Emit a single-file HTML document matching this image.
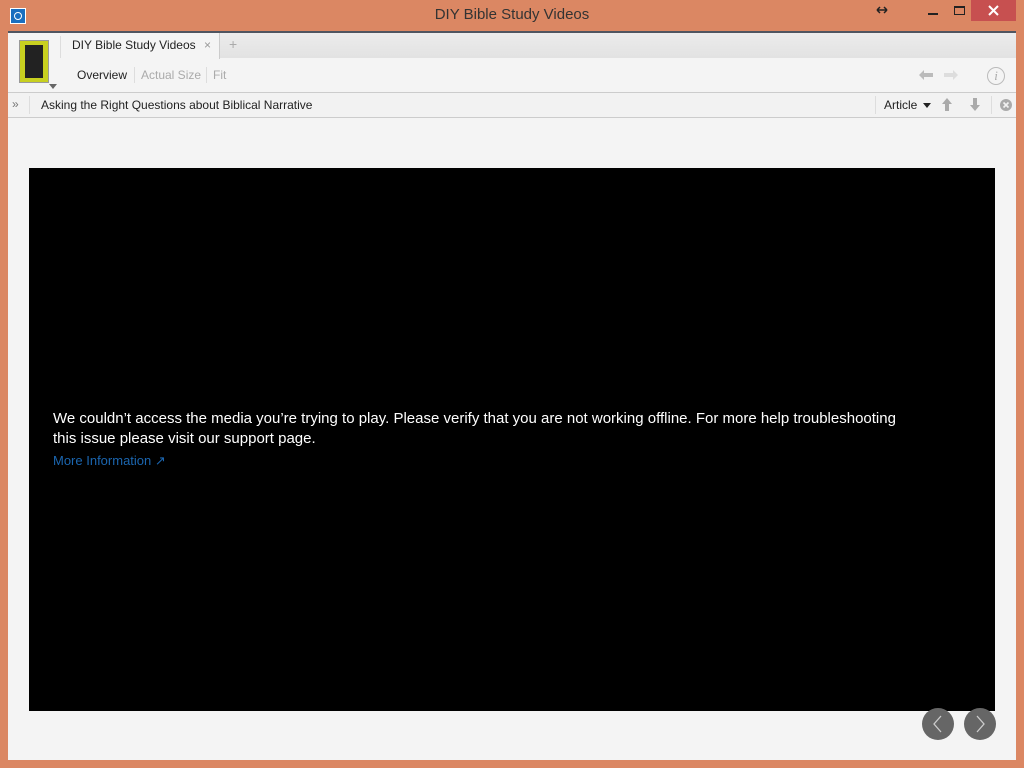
<!DOCTYPE html>
<html><head><meta charset="utf-8"><style>
*{margin:0;padding:0;box-sizing:border-box}
body{width:1024px;height:768px;background:#db8763;font-family:"Liberation Sans",sans-serif;position:relative;overflow:hidden}
.abs{position:absolute}
.title{left:0;top:6px;width:1024px;text-align:center;font-size:15px;color:#333}
.win{left:8px;top:31px;width:1008px;height:729px;background:#f4f4f4}
.t{font-size:12px;color:#222;white-space:nowrap}
</style></head><body>
<div class="abs" style="left:10px;top:8px;width:16px;height:16px;background:#1a6fbf;border:1px solid #fff"><div style="margin:3px;width:8px;height:8px;border:1.5px solid #fff;border-radius:50%"></div></div>
<div class="abs title">DIY Bible Study Videos</div>
<svg class="abs" style="left:876px;top:5px" width="12" height="10"><path d="M1 5H11M1 5L4 2M1 5L4 8M11 5L8 2M11 5L8 8" stroke="#222" stroke-width="1.5" fill="none"/></svg>
<div class="abs" style="left:928px;top:13px;width:10px;height:2px;background:#222"></div>
<div class="abs" style="left:954px;top:6px;width:11px;height:9px;border:1px solid #222;border-top-width:2px"></div>
<div class="abs" style="left:971px;top:0;width:45px;height:21px;background:#c75050"></div>
<svg class="abs" style="left:988px;top:5px" width="11" height="11"><path d="M1 1L10 10M10 1L1 10" stroke="#fff" stroke-width="2"/></svg>
<div class="abs win"></div>
<div class="abs" style="left:8px;top:31px;width:1008px;height:2px;background:#505560"></div>
<div class="abs" style="left:8px;top:33px;width:1008px;height:25px;background:linear-gradient(#ececec,#e2e2e2)"></div>
<div class="abs" style="left:8px;top:33px;width:212px;height:27px;background:#f4f4f4"></div>
<div class="abs" style="left:219px;top:33px;width:1px;height:26px;background:#ccc"></div>
<div class="abs" style="left:60px;top:36px;width:1px;height:22px;background:#ddd"></div>
<div class="abs" style="left:19px;top:40px;width:30px;height:43px;background:#c8d020;border:1px solid #999"><div style="margin:4px 5px;height:33px;background:#222"></div></div>
<div class="abs" style="left:49px;top:84px;width:0;height:0;border:4px solid transparent;border-top:5px solid #666"></div>
<div class="abs t" style="left:72px;top:38px">DIY Bible Study Videos</div>
<div class="abs" style="left:204px;top:38px;font-size:12px;color:#999">×</div>
<div class="abs" style="left:229px;top:36px;font-size:14px;color:#aaa">+</div>
<div class="abs t" style="left:77px;top:68px">Overview</div>
<div class="abs" style="left:134px;top:67px;width:1px;height:16px;background:#ddd"></div>
<div class="abs t" style="left:141px;top:68px;color:#aaa">Actual Size</div>
<div class="abs" style="left:206px;top:67px;width:1px;height:16px;background:#ddd"></div>
<div class="abs t" style="left:213px;top:68px;color:#aaa">Fit</div>
<svg class="abs" style="left:918px;top:69px" width="16" height="12"><path d="M1 6L6 1V4H15V8H6V11Z" fill="#bbb"/></svg>
<svg class="abs" style="left:943px;top:69px" width="16" height="12"><path d="M15 6L10 1V4H1V8H10V11Z" fill="#ddd"/></svg>
<div class="abs" style="left:987px;top:67px;width:18px;height:18px;border:1px solid #bbb;border-radius:50%;text-align:center;font:italic 13px/16px 'Liberation Serif',serif;color:#aaa">i</div>
<div class="abs" style="left:8px;top:92px;width:1008px;height:1px;background:#ccc"></div>
<div class="abs" style="left:8px;top:117px;width:1008px;height:1px;background:#ccc"></div>
<div class="abs" style="left:8px;top:93px;width:1008px;height:24px;background:#f2f2f2"></div>
<div class="abs t" style="left:12px;top:97px;color:#777">»</div>
<div class="abs" style="left:29px;top:96px;width:1px;height:18px;background:#ddd"></div>
<div class="abs t" style="left:41px;top:98px">Asking the Right Questions about Biblical Narrative</div>
<div class="abs" style="left:875px;top:96px;width:1px;height:18px;background:#ddd"></div>
<div class="abs t" style="left:884px;top:98px">Article</div>
<div class="abs" style="left:923px;top:103px;border:4px solid transparent;border-top:5px solid #222"></div>
<svg class="abs" style="left:941px;top:97px" width="12" height="15"><path d="M6 1L11 7H8V14H4V7H1Z" fill="#aaa"/></svg>
<svg class="abs" style="left:969px;top:97px" width="12" height="15"><path d="M6 14L11 8H8V1H4V8H1Z" fill="#aaa"/></svg>
<div class="abs" style="left:991px;top:96px;width:1px;height:18px;background:#ddd"></div>
<div class="abs" style="left:1000px;top:99px;width:12px;height:12px;border-radius:50%;background:#aaa"></div>
<svg class="abs" style="left:1000px;top:99px" width="12" height="12"><path d="M3.5 3.5L8.5 8.5M8.5 3.5L3.5 8.5" stroke="#f2f2f2" stroke-width="1.6"/></svg>
<div class="abs" style="left:29px;top:168px;width:966px;height:543px;background:#000"></div>
<div class="abs" style="left:53px;top:409px;width:940px;font-size:15px;line-height:20px;color:#fff;white-space:nowrap">We couldn’t access the media you’re trying to play. Please verify that you are not working offline. For more help troubleshooting<br>this issue please visit our support page.</div>
<div class="abs" style="left:53px;top:453px;font-size:13px;color:#1b66b0">More Information ↗</div>
<div class="abs" style="left:922px;top:708px;width:32px;height:32px;border-radius:50%;background:#666"></div>
<svg class="abs" style="left:922px;top:708px" width="32" height="32"><path d="M19 8L12 16L19 24" stroke="#ccc" stroke-width="1.3" fill="none"/></svg>
<div class="abs" style="left:964px;top:708px;width:32px;height:32px;border-radius:50%;background:#666"></div>
<svg class="abs" style="left:964px;top:708px" width="32" height="32"><path d="M13 8L20 16L13 24" stroke="#ccc" stroke-width="1.3" fill="none"/></svg>
</body></html>
